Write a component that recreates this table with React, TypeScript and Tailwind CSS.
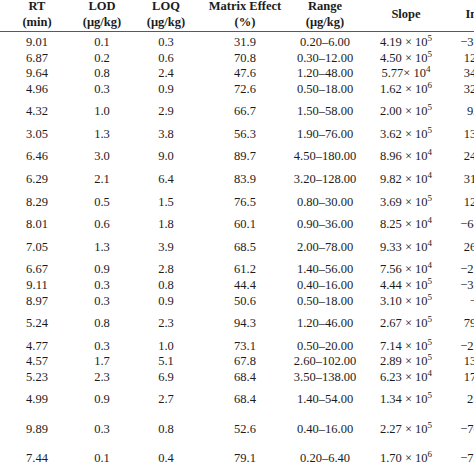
type Row = {
  rt: string;
  lod: string;
  loq: string;
  me: string;
  range: string;
  slope: [string, string];
  tight?: boolean;
  icpt: string;
  gap: string;
};

const rows: Row[] = [
  { rt: "9.01", lod: "0.1", loq: "0.3", me: "31.9", range: "0.20–6.00", slope: ["4.19", "5"], icpt: "−3146.2", gap: "mt-[3px]" },
  { rt: "6.87", lod: "0.2", loq: "0.6", me: "70.8", range: "0.30–12.00", slope: ["4.50", "5"], icpt: "1296.4", gap: "mt-0" },
  { rt: "9.64", lod: "0.8", loq: "2.4", me: "47.6", range: "1.20–48.00", slope: ["5.77", "4"], tight: true, icpt: "3421.7", gap: "mt-0" },
  { rt: "4.96", lod: "0.3", loq: "0.9", me: "72.6", range: "0.50–18.00", slope: ["1.62", "6"], icpt: "3205.8", gap: "mt-0" },
  { rt: "4.32", lod: "1.0", loq: "2.9", me: "66.7", range: "1.50–58.00", slope: ["2.00", "5"], icpt: "921.3", gap: "mt-[7px]" },
  { rt: "3.05", lod: "1.3", loq: "3.8", me: "56.3", range: "1.90–76.00", slope: ["3.62", "5"], icpt: "1318.5", gap: "mt-[7px]" },
  { rt: "6.46", lod: "3.0", loq: "9.0", me: "89.7", range: "4.50–180.00", slope: ["8.96", "4"], icpt: "2417.9", gap: "mt-[7px]" },
  { rt: "6.29", lod: "2.1", loq: "6.4", me: "83.9", range: "3.20–128.00", slope: ["9.82", "4"], icpt: "3106.4", gap: "mt-[7px]" },
  { rt: "8.29", lod: "0.5", loq: "1.5", me: "76.5", range: "0.80–30.00", slope: ["3.69", "5"], icpt: "1284.6", gap: "mt-[7.5px]" },
  { rt: "8.01", lod: "0.6", loq: "1.8", me: "60.1", range: "0.90–36.00", slope: ["8.25", "4"], icpt: "−6428.1", gap: "mt-[7px]" },
  { rt: "7.05", lod: "1.3", loq: "3.9", me: "68.5", range: "2.00–78.00", slope: ["9.33", "4"], icpt: "2631.0", gap: "mt-[7px]" },
  { rt: "6.67", lod: "0.9", loq: "2.8", me: "61.2", range: "1.40–56.00", slope: ["7.56", "4"], icpt: "−2145.3", gap: "mt-[6.5px]" },
  { rt: "9.11", lod: "0.3", loq: "0.8", me: "44.4", range: "0.40–16.00", slope: ["4.44", "5"], icpt: "−3362.8", gap: "mt-[1px]" },
  { rt: "8.97", lod: "0.3", loq: "0.9", me: "50.6", range: "0.50–18.00", slope: ["3.10", "5"], icpt: "−5.3", gap: "mt-0" },
  { rt: "5.24", lod: "0.8", loq: "2.3", me: "94.3", range: "1.20–46.00", slope: ["2.67", "5"], icpt: "7916.2", gap: "mt-[7px]" },
  { rt: "4.77", lod: "0.3", loq: "1.0", me: "73.1", range: "0.50–20.00", slope: ["7.14", "5"], icpt: "−2238.4", gap: "mt-[7px]" },
  { rt: "4.57", lod: "1.7", loq: "5.1", me: "67.8", range: "2.60–102.00", slope: ["2.89", "5"], icpt: "1352.7", gap: "mt-0" },
  { rt: "5.23", lod: "2.3", loq: "6.9", me: "68.4", range: "3.50–138.00", slope: ["6.23", "4"], icpt: "1740.9", gap: "mt-0" },
  { rt: "4.99", lod: "0.9", loq: "2.7", me: "68.4", range: "1.40–54.00", slope: ["1.34", "5"], icpt: "254.8", gap: "mt-[7px]" },
  { rt: "9.89", lod: "0.3", loq: "0.8", me: "52.6", range: "0.40–16.00", slope: ["2.27", "5"], icpt: "−7063.5", gap: "mt-[14.5px]" },
  { rt: "7.44", lod: "0.1", loq: "0.4", me: "79.1", range: "0.20–6.40", slope: ["1.70", "6"], icpt: "−7519.2", gap: "mt-[13.5px]" },
];

const grid =
  "grid grid-cols-[74px_56px_72px_86px_74px_88px_62px] leading-[15.5px]";
const cell = "flex justify-center whitespace-nowrap";

function Sup({ n }: { n: string }) {
  return <sup className="relative -top-[1px] align-top text-[9px] leading-none">{n}</sup>;
}

export default function App() {
  return (
    <div className="w-[474px] h-[474px] overflow-hidden bg-white text-[#1c1c1c] font-['Liberation_Serif',serif] text-[12.5px]">
      <div className={`${grid} -mt-[1px] pb-[1px] font-bold`}>
        <div className="flex flex-col items-center"><span>RT</span><span>(min)</span></div>
        <div className="flex flex-col items-center"><span>LOD</span><span>(μg/kg)</span></div>
        <div className="flex flex-col items-center"><span>LOQ</span><span>(μg/kg)</span></div>
        <div className="flex flex-col items-center whitespace-nowrap"><span>Matrix Effect</span><span>(%)</span></div>
        <div className="flex flex-col items-center"><span>Range</span><span>(μg/kg)</span></div>
        <div className="flex items-center justify-center">Slope</div>
        <div className="flex items-center justify-center whitespace-nowrap pl-[18px]">Intercept</div>
      </div>
      <div className="h-px bg-[#5a5a5a]" />
      {rows.map((r, i) => (
        <div key={i} className={`${grid} ${r.gap}`}>
          <div className={cell}>{r.rt}</div>
          <div className={cell}>{r.lod}</div>
          <div className={cell}>{r.loq}</div>
          <div className={cell}>{r.me}</div>
          <div className={cell}>{r.range}</div>
          <div className={cell}>
            <span>
              {r.slope[0]}
              {r.tight ? "× " : " × "}10
              <Sup n={r.slope[1]} />
            </span>
          </div>
          <div className={cell}>{r.icpt}</div>
        </div>
      ))}
    </div>
  );
}
